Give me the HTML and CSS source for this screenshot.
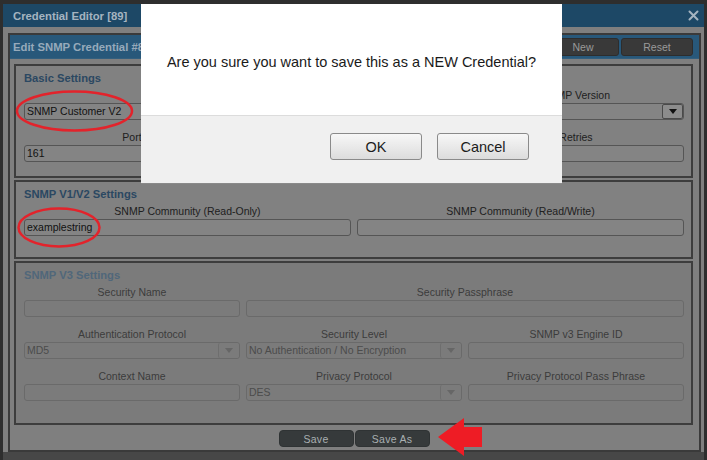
FILE: index.html
```html
<!DOCTYPE html>
<html lang="en">
<head>
    <meta charset="UTF-8">
    <meta name="viewport" content="width=device-width, initial-scale=1.0">
    <title>Credential Editor</title>
    <link rel="stylesheet" href="styles.css">
</head>
<body>

    <div class="window">

        <!-- Title bar -->
        <div class="titlebar">
            <span>Credential Editor [89]</span>
            <svg class="close" width="11" height="11" viewBox="0 0 11 11">
                <path d="M1.5 1.5 L9.5 9.5 M9.5 1.5 L1.5 9.5" stroke="#a5b4c0" stroke-width="2" stroke-linecap="round"/>
            </svg>
        </div>

        <div class="panel">
            <div class="panel-head">
                <span>Edit SNMP Credential #89</span>
                <div class="head-btns">
                    <button class="dark-btn">New</button>
                    <button class="dark-btn">Reset</button>
                </div>
            </div>

            <div class="panel-body">

                <!-- Basic Settings -->
                <div class="group basic">
                    <div class="group-title">Basic Settings</div>
                    <div class="cols3">
                        <div class="field span2">
                            <label>Profile Name</label>
                            <div class="box">SNMP Customer V2</div>
                        </div>
                        <div class="field">
                            <label>SNMP Version</label>
                            <div class="box select">SNMP V2<span class="arrow"><i></i></span></div>
                        </div>
                        <div class="field">
                            <label>Port</label>
                            <div class="box">161</div>
                        </div>
                        <div class="field">
                            <label>&nbsp;</label>
                            <div class="box"></div>
                        </div>
                        <div class="field">
                            <label>Retries</label>
                            <div class="box"></div>
                        </div>
                    </div>
                </div>

                <!-- SNMP V1/V2 -->
                <div class="group v12">
                    <div class="group-title">SNMP V1/V2 Settings</div>
                    <div class="cols2">
                        <div class="field">
                            <label>SNMP Community (Read-Only)</label>
                            <div class="box">examplestring</div>
                        </div>
                        <div class="field">
                            <label>SNMP Community (Read/Write)</label>
                            <div class="box"></div>
                        </div>
                    </div>
                </div>

                <!-- SNMP V3 (disabled) -->
                <div class="group v3 disabled">
                    <div class="group-title">SNMP V3 Settings</div>
                    <div class="cols3">
                        <div class="field">
                            <label>Security Name</label>
                            <div class="box"></div>
                        </div>
                        <div class="field span2">
                            <label>Security Passphrase</label>
                            <div class="box"></div>
                        </div>
                        <div class="field">
                            <label>Authentication Protocol</label>
                            <div class="box select">MD5<span class="arrow"><i></i></span></div>
                        </div>
                        <div class="field">
                            <label>Security Level</label>
                            <div class="box select">No Authentication / No Encryption<span class="arrow"><i></i></span></div>
                        </div>
                        <div class="field">
                            <label>SNMP v3 Engine ID</label>
                            <div class="box"></div>
                        </div>
                        <div class="field">
                            <label>Context Name</label>
                            <div class="box"></div>
                        </div>
                        <div class="field">
                            <label>Privacy Protocol</label>
                            <div class="box select">DES<span class="arrow"><i></i></span></div>
                        </div>
                        <div class="field">
                            <label>Privacy Protocol Pass Phrase</label>
                            <div class="box"></div>
                        </div>
                    </div>
                </div>

                <div class="bottom-btns">
                    <button class="save-btn">Save</button>
                    <button class="save-btn">Save As</button>
                </div>
            </div>
        </div>

        <div class="statusbar"></div>

        <!-- Confirm dialog -->
        <div class="dialog">
            <div class="dialog-msg">Are you sure you want to save this as a NEW Credential?</div>
            <div class="dialog-foot">
                <button class="light-btn">OK</button>
                <button class="light-btn">Cancel</button>
            </div>
        </div>

        <!-- red annotations -->
        <svg class="marks" width="707" height="460" viewBox="0 0 707 460">
            <ellipse cx="74.5" cy="111" rx="57.5" ry="19.5" fill="none" stroke="#e3232b" stroke-width="2.5"/>
            <ellipse cx="59" cy="227.5" rx="40.5" ry="19" fill="none" stroke="#e3232b" stroke-width="2.5"/>
            <polygon points="438,437 464,418 464,427 482,427 482,447 464,447 464,456" fill="#ee1c25"/>
        </svg>
    </div>

</body>
</html>
```

FILE: styles.css
```css
* {
    box-sizing: border-box;
}

body {
    margin: 0;
    background-color: #2e2e2e;
    font-family: "Liberation Sans", Arial, sans-serif;
}

.window {
    position: relative;
    width: 707px;
    height: 460px;
    background-color: #7f7f7f;
    border: solid #2e2e2e;
    border-width: 4px 3px 0 3px;
    display: flex;
    flex-direction: column;
    overflow: hidden;
}

.titlebar {
    height: 23px;
    flex: none;
    background-color: #1d4866;
    color: #a5b4c0;
    font-weight: bold;
    font-size: 11.3px;
    display: flex;
    align-items: center;
    justify-content: space-between;
    padding: 0 5px 0 10px;
}

.panel {
    flex: none;
    height: 419px;
    margin: 6px 3px 0 5px;
    border: 2px solid #3a3a3a;
    display: flex;
    flex-direction: column;
}

.panel-head {
    height: 24px;
    flex: none;
    background-color: #28587a;
    border-bottom: 1px solid #335f7e;
    color: #97aabb;
    font-weight: bold;
    font-size: 11.3px;
    display: flex;
    align-items: center;
    justify-content: space-between;
    padding: 0 6px 0 3px;
}

.head-btns {
    display: flex;
    gap: 2px;
}

.dark-btn {
    width: 72px;
    height: 18px;
    padding: 0;
    border: 1px solid #2d2d2d;
    border-radius: 3px;
    background-color: #393939;
    color: #9a9a9a;
    font-family: "Liberation Sans", Arial, sans-serif;
    font-size: 10.5px;
}

.panel-body {
    flex: 1;
    padding: 5px 6px 0 4px;
    display: flex;
    flex-direction: column;
}

.group {
    border: 2px solid #3d3d3d;
    background-color: #818181;
    padding: 5px 7px 14px 8px;
    margin-bottom: 2px;
}

.group.v12 {
    padding-top: 5px;
    padding-bottom: 21px;
}

.group.v3 {
    background-color: #7b7b7b;
    padding-bottom: 22px;
    margin-bottom: 0;
}

.group-title {
    line-height: 14px;
    margin-bottom: 3px;
    font-weight: bold;
    font-size: 11.2px;
    color: #2b4862;
}

.cols3 {
    display: grid;
    grid-template-columns: repeat(3, 1fr);
    column-gap: 6px;
    row-gap: 10px;
}

.cols2 {
    display: grid;
    grid-template-columns: repeat(2, 1fr);
    column-gap: 6px;
}

.span2 {
    grid-column: span 2;
}

.field label {
    display: block;
    text-align: center;
    line-height: 14px;
    margin-bottom: 1px;
    font-size: 10.5px;
    color: #202020;
}

.box {
    position: relative;
    height: 17px;
    border: 1px solid #555555;
    border-radius: 3px;
    background-color: #848484;
    padding: 0 2px;
    line-height: 15px;
    font-size: 10.5px;
    color: #111111;
    white-space: nowrap;
    overflow: hidden;
}

.box .arrow {
    position: absolute;
    right: 0;
    top: 0;
    width: 21px;
    height: 15px;
    border: 1px solid #4a4a4a;
    border-radius: 2px;
    background-color: #8c8c8c;
    display: flex;
    align-items: center;
    justify-content: center;
}

.box .arrow i {
    width: 0;
    height: 0;
    border-left: 4px solid transparent;
    border-right: 4px solid transparent;
    border-top: 5px solid #111111;
}

/* disabled V3 section */
.disabled .group-title {
    color: #50677a;
}

.disabled .field label {
    color: #3c3c3c;
}

.disabled .box {
    background-color: #7b7b7b;
    border-color: #6a6a6a;
    color: #4c4c4c;
}

.disabled .box .arrow {
    border: none;
    border-left: 1px solid #6e6e6e;
    background-color: #7b7b7b;
}

.disabled .box .arrow i {
    border-top-color: #666666;
}

.bottom-btns {
    display: flex;
    justify-content: center;
    gap: 1px;
    margin-top: 5px;
    padding-left: 1px;
}

.save-btn {
    width: 75px;
    height: 17px;
    padding: 0;
    border: 1px solid #2f3334;
    border-radius: 4px;
    background-color: #363a3b;
    color: #a9b0b2;
    font-family: "Liberation Sans", Arial, sans-serif;
    font-size: 10.5px;
    letter-spacing: 0.3px;
}

.statusbar {
    flex: 1;
    background-color: #474747;
}

/* modal dialog */
.dialog {
    position: absolute;
    left: 138px;
    top: 0;
    width: 421px;
    height: 180px;
    background-color: #ffffff;
    border-bottom: 1px solid #8a8a8a;
    display: flex;
    flex-direction: column;
}

.dialog-msg {
    height: 111px;
    display: flex;
    align-items: center;
    justify-content: center;
    padding-top: 4px;
    font-size: 14.5px;
    color: #1a1a1a;
}

.dialog-foot {
    flex: 1;
    background-color: #f0f0f0;
    border-top: 1px solid #dcdcdc;
    display: flex;
    justify-content: flex-end;
    gap: 15px;
    padding: 17px 33px 0 0;
}

.light-btn {
    width: 92px;
    height: 27px;
    padding: 0;
    border: 1px solid #8a8a8a;
    border-radius: 3px;
    background: linear-gradient(#f7f7f7, #dcdcdc);
    color: #1c1c1c;
    font-family: "Liberation Sans", Arial, sans-serif;
    font-size: 14.5px;
}

.marks {
    position: absolute;
    left: -3px;
    top: -4px;
    pointer-events: none;
}
```
